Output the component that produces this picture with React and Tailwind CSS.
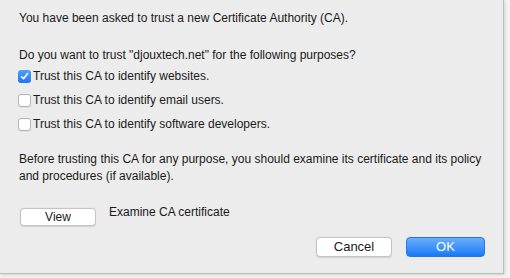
import React from 'react';

const Check = ({ checked }) => (
  <span
    className={
      checked
        ? 'flex h-[13px] w-[13px] items-center justify-center rounded-[3px] bg-gradient-to-b from-[#4ea1fb] to-[#1d74f5]'
        : 'h-[13px] w-[13px] rounded-[3px] border border-[#b4b4b4] bg-white shadow-[0_0.5px_0.5px_rgba(0,0,0,0.1)]'
    }
  >
    {checked && (
      <svg width="9" height="9" viewBox="0 0 9 9">
        <path d="M1.6 4.8 L3.6 6.8 L7.6 1.6" fill="none" stroke="white" strokeWidth="1.6" strokeLinecap="round" strokeLinejoin="round" />
      </svg>
    )}
  </span>
);

const Option = ({ checked, label }) => (
  <div className="flex items-center gap-[2px]">
    <Check checked={checked} />
    <span>{label}</span>
  </div>
);

export default function App() {
  return (
    <div className="h-[278px] w-[510px] bg-[#f4f4f4] font-['Liberation_Sans',Arial,sans-serif] text-[12px] text-[#1a1a1a]">
      <div className="flex h-[274px] w-[504px] flex-col border-r border-b border-[#bcbcbc] bg-[#ececec] shadow-[1px_1px_3px_rgba(0,0,0,0.15)]">
        <div className="pl-[18px] pt-[10px]">
          <p className="pl-px leading-[16px]">You have been asked to trust a new Certificate Authority (CA).</p>
          <p className="mt-[21px] pl-px leading-[16px]">Do you want to trust "djouxtech.net" for the following purposes?</p>
          <div className="mt-[5px] flex flex-col gap-[8px] leading-[16px]">
            <Option checked label="Trust this CA to identify websites." />
            <Option label="Trust this CA to identify email users." />
            <Option label="Trust this CA to identify software developers." />
          </div>
          <p className="mt-[19px] w-[470px] pl-px leading-[17px]">
            Before trusting this CA for any purpose, you should examine its certificate and its policy and procedures (if available).
          </p>
          <div className="mt-[19px] flex items-start gap-[13px] pl-[2px]">
            <button className="mt-[4px] h-[18px] w-[76px] rounded-[4px] border border-[#c4c4c4] bg-white text-[12px] leading-[16px] shadow-[0_0.5px_1px_rgba(0,0,0,0.12)]">
              View
            </button>
            <span className="leading-[16px]">Examine CA certificate</span>
          </div>
        </div>
        <div className="mt-[11px] flex justify-end gap-[14px] pr-[18px]">
          <button className="h-[20px] w-[76px] rounded-[4px] border border-[#c4c4c4] bg-white text-[13px] leading-[18px] shadow-[0_0.5px_1px_rgba(0,0,0,0.12)]">
            Cancel
          </button>
          <button className="h-[20px] w-[79px] rounded-[4px] border border-[#2a73e8] bg-gradient-to-b from-[#68aefc] to-[#1479f6] text-[13px] leading-[18px] text-white">
            OK
          </button>
        </div>
      </div>
    </div>
  );
}
